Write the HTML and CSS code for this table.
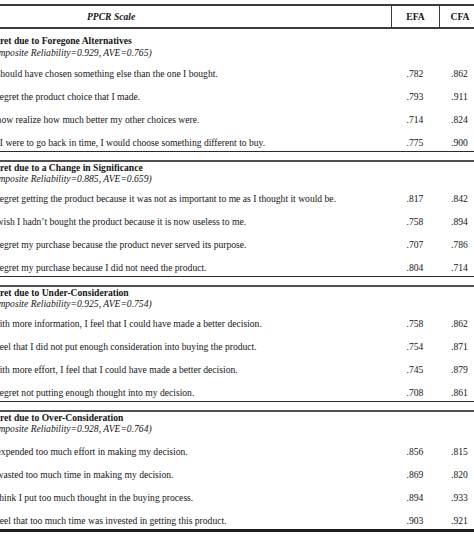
FILE: index.html
```html
<!DOCTYPE html>
<html lang="en">
<head>
<meta charset="utf-8">
<title>PPCR Scale</title>
<link rel="stylesheet" href="styles.css">
</head>
<body>
<div class="sheet">
  <div class="head">
    <div class="h-scale">PPCR Scale</div>
    <div class="h-num">EFA</div>
    <div class="h-num">CFA</div>
  </div>

  <section class="group first">
    <div class="g-head">
      <div class="g-title">Regret due to Foregone Alternatives</div>
      <div class="g-rel">(Composite Reliability=0.929, AVE=0.765)</div>
    </div>
    <div class="row"><span class="item">I should have chosen something else than the one I bought.</span><span class="num">.782</span><span class="num">.862</span></div>
    <div class="row"><span class="item">I regret the product choice that I made.</span><span class="num">.793</span><span class="num">.911</span></div>
    <div class="row"><span class="item">I now realize how much better my other choices were.</span><span class="num">.714</span><span class="num">.824</span></div>
    <div class="row"><span class="item">If I were to go back in time, I would choose something different to buy.</span><span class="num">.775</span><span class="num">.900</span></div>
  </section>

  <section class="group">
    <div class="g-head">
      <div class="g-title">Regret due to a Change in Significance</div>
      <div class="g-rel">(Composite Reliability=0.885, AVE=0.659)</div>
    </div>
    <div class="row"><span class="item">I regret getting the product because it was not as important to me as I thought it would be.</span><span class="num">.817</span><span class="num">.842</span></div>
    <div class="row"><span class="item">I wish I hadn’t bought the product because it is now useless to me.</span><span class="num">.758</span><span class="num">.894</span></div>
    <div class="row"><span class="item">I regret my purchase because the product never served its purpose.</span><span class="num">.707</span><span class="num">.786</span></div>
    <div class="row"><span class="item">I regret my purchase because I did not need the product.</span><span class="num">.804</span><span class="num">.714</span></div>
  </section>

  <section class="group">
    <div class="g-head">
      <div class="g-title">Regret due to Under-Consideration</div>
      <div class="g-rel">(Composite Reliability=0.925, AVE=0.754)</div>
    </div>
    <div class="row"><span class="item">With more information, I feel that I could have made a better decision.</span><span class="num">.758</span><span class="num">.862</span></div>
    <div class="row"><span class="item">I feel that I did not put enough consideration into buying the product.</span><span class="num">.754</span><span class="num">.871</span></div>
    <div class="row"><span class="item">With more effort, I feel that I could have made a better decision.</span><span class="num">.745</span><span class="num">.879</span></div>
    <div class="row"><span class="item">I regret not putting enough thought into my decision.</span><span class="num">.708</span><span class="num">.861</span></div>
  </section>

  <section class="group last">
    <div class="g-head">
      <div class="g-title">Regret due to Over-Consideration</div>
      <div class="g-rel">(Composite Reliability=0.928, AVE=0.764)</div>
    </div>
    <div class="row"><span class="item">I expended too much effort in making my decision.</span><span class="num">.856</span><span class="num">.815</span></div>
    <div class="row"><span class="item">I wasted too much time in making my decision.</span><span class="num">.869</span><span class="num">.820</span></div>
    <div class="row"><span class="item">I think I put too much thought in the buying process.</span><span class="num">.894</span><span class="num">.933</span></div>
    <div class="row"><span class="item">I feel that too much time was invested in getting this product.</span><span class="num">.903</span><span class="num">.921</span></div>
  </section>
</div>
</body>
</html>
```

FILE: styles.css
```css
html, body {
  margin: 0;
  padding: 0;
  background: #ffffff;
  overflow: hidden;
}

body {
  font-family: "Liberation Serif", "Times New Roman", serif;
  font-size: 9.6px;
  color: #161616;
}

.sheet {
  margin-left: -17px;
  width: 497px;
  padding-top: 4px;
}

.head {
  display: grid;
  grid-template-columns: 408px 48px 41px;
  height: 21px;
  border-top: 2px solid #3a3a3a;
  border-bottom: 2px solid #3a3a3a;
  align-items: center;
}

.h-scale {
  padding-left: 104px;
  font-weight: bold;
  font-style: italic;
}

.h-num {
  height: 100%;
  display: flex;
  align-items: center;
  justify-content: center;
  border-left: 1px solid #3a3a3a;
  font-weight: bold;
}

.group {
  border-bottom: 1px solid #2a2a2a;
}

.group + .group {
  margin-top: 8px;
  border-top: 2px solid #505050;
}

.group.last {
  border-bottom: 3px solid #1e1e1e;
}

.g-head {
  padding-left: 1px;
  line-height: 11px;
}

.first .g-head {
  padding-top: 6px;
  line-height: 12px;
}

.g-title {
  font-weight: bold;
}

.g-rel {
  font-style: italic;
}

.row {
  display: grid;
  grid-template-columns: 408px 48px 41px;
  padding: 9px 0 2px;
  line-height: 12px;
  white-space: nowrap;
}

.last .g-head + .row {
  padding-top: 12px;
}

.item {
  padding-left: 8px;
}

.num {
  text-align: center;
}
```
